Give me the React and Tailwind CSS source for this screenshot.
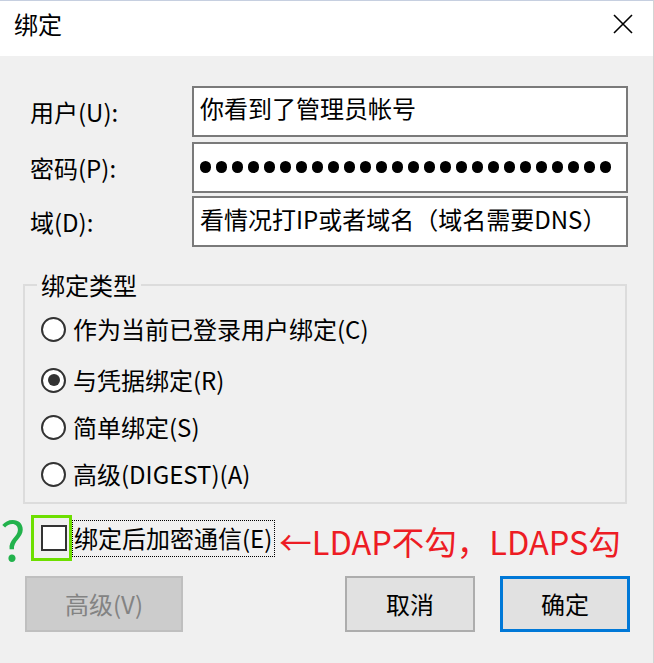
import React from 'react';

function Radio({ label, checked, className }) {
  return (
    <div className={`flex items-center h-[30px] ${className}`}>
      <span className="w-[25px] h-[25px] rounded-full border-2 border-[#333333] bg-white flex items-center justify-center shrink-0">
        {checked && <span className="w-[12px] h-[12px] rounded-full bg-[#333333]" />}
      </span>
      <span className="ml-[7px] leading-[30px]">{label}</span>
    </div>
  );
}

function Field({ label, className, children }) {
  return (
    <div className={`flex items-center ${className}`}>
      <div className="w-[192px] pl-[30px] leading-[30px]">{label}</div>
      <div className="w-[436px] h-[51px] border-2 border-[#7a7a7a] bg-white flex items-center pl-[6px]">
        {children}
      </div>
    </div>
  );
}

export default function App() {
  const dots = Array.from({ length: 26 });

  return (
    <div className="w-[654px] h-[663px] bg-[#f0f0f0] border-t border-t-[#c6cfe0] border-r border-r-[#d4d4d4] text-black text-[24px] font-['Noto_Sans_CJK_SC',sans-serif] overflow-hidden">
      {/* title bar */}
      <div className="h-[55px] bg-white flex items-start justify-between pl-[14px] pr-[20px]">
        <span className="pt-[8px] leading-[30px]">绑定</span>
        <svg className="mt-[13px]" width="20" height="20" viewBox="0 0 20 20">
          <path d="M1 1 L19 19 M19 1 L1 19" stroke="#000" strokeWidth="1.6" fill="none" />
        </svg>
      </div>

      <Field label="用户(U):" className="mt-[30px]">
        <span className="leading-[30px] pb-[8px]">你看到了管理员帐号</span>
      </Field>
      <Field label="密码(P):" className="mt-[5px]">
        <div className="flex gap-[5px] pb-[2px]">
          {dots.map((_, i) => (
            <span key={i} className="w-[11px] h-[12px] rounded-full bg-black" />
          ))}
        </div>
      </Field>
      <Field label="域(D):" className="mt-[3px]">
        <span className="leading-[30px] pb-[6px] whitespace-nowrap">看情况打IP或者域名（域名需要DNS）</span>
      </Field>

      <fieldset className="ml-[23px] mt-[23px] w-[604px] border-2 border-[#dcdcdc] pl-[16px] pb-[13px]">
        <legend className="ml-[-4px] px-[4px] leading-[30px]">绑定类型</legend>
        <Radio className="mt-[14px]" label="作为当前已登录用户绑定(C)" />
        <Radio className="mt-[21px]" label="与凭据绑定(R)" checked />
        <Radio className="mt-[17px]" label="简单绑定(S)" />
        <Radio className="mt-[17px]" label="高级(DIGEST)(A)" />
      </fieldset>

      <div className="flex items-center mt-[11px]">
        <span className="w-[31px] text-[54px] leading-[46px] text-[#22b24c]">?</span>
        <div className="w-[41px] h-[46px] border-[3px] border-[#6ddf00] pl-[7px] flex items-center">
          <span className="w-[26px] h-[26px] border-2 border-[#333333] bg-white" />
        </div>
        <span className="h-[37px] border border-dotted border-black pl-[1px] pr-[2px] leading-[34px]">绑定后加密通信(E)</span>
        <span className="ml-[4px] mt-[6px] text-[32.5px] leading-[36px] text-[#ed1c24] whitespace-nowrap">←LDAP不勾，LDAPS勾</span>
      </div>

      <div className="flex mt-[15px]">
        <div className="ml-[25px] w-[158px] h-[56px] bg-[#cccccc] border-2 border-[#bfbfbf] text-[#838383] flex items-center justify-center">
          高级(V)
        </div>
        <div className="ml-[162px] w-[130px] h-[56px] bg-[#e1e1e1] border-2 border-[#adadad] flex items-center justify-center">
          取消
        </div>
        <div className="ml-[25px] w-[130px] h-[56px] bg-[#e1e1e1] border-[3px] border-[#0078d7] flex items-center justify-center">
          确定
        </div>
      </div>
    </div>
  );
}
